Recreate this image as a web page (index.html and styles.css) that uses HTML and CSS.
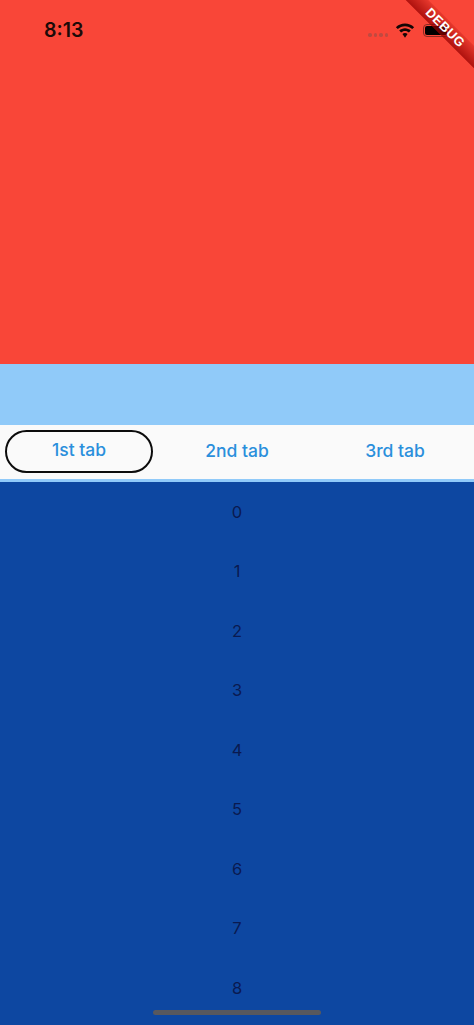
FILE: index.html
```html
<!DOCTYPE html>
<html lang="en">

<head>
    <meta charset="UTF-8">
    <meta name="viewport" content="width=device-width, initial-scale=1.0">
    <title>Tabs</title>
    <link rel="stylesheet" href="styles.css">
</head>

<body>
    <div class="app">
        <div class="header">
            <div class="status-bar">
                <span class="time">8:13</span>
                <div class="status-icons">
                    <div class="signal">
                        <span class="dot"></span>
                        <span class="dot"></span>
                        <span class="dot"></span>
                        <span class="dot"></span>
                    </div>
                    <svg class="wifi" viewBox="0 0 18 13.500" width="20" height="15">
                        <path d="M9 2.900c2.500 0 4.800 1 6.500 2.600l1.700-1.700C15 1.700 12.100.5 9 .5S3 1.700.8 3.800l1.700 1.700C4.200 3.900 6.500 2.900 9 2.900z" />
                        <path d="M9 7.100c1.400 0 2.600.5 3.500 1.400l1.700-1.700C12.800 5.500 11 4.700 9 4.700s-3.800.8-5.200 2.100l1.700 1.700c.9-.9 2.100-1.400 3.500-1.400z" />
                        <path d="M9 9.100c-.9 0-1.700.3-2.300.9L9 13.300l2.300-3.300c-.6-.6-1.400-.9-2.300-.9z" />
                    </svg>
                    <div class="battery"><div class="battery-fill"></div></div>
                </div>
            </div>
        </div>
        <div class="spacer"></div>
        <div class="tabs">
            <div class="tab"><span class="tab-pill">1st tab</span></div>
            <div class="tab">2nd tab</div>
            <div class="tab">3rd tab</div>
        </div>
        <div class="divider"></div>
        <div class="list">
            <div class="item">0</div>
            <div class="item">1</div>
            <div class="item">2</div>
            <div class="item">3</div>
            <div class="item">4</div>
            <div class="item">5</div>
            <div class="item">6</div>
            <div class="item">7</div>
            <div class="item">8</div>
        </div>
        <div class="home-bar"></div>
        <div class="debug-banner">DEBUG</div>
    </div>
</body>

</html>
```

FILE: styles.css
```css
html,
body {
    margin: 0;
    padding: 0;
}

body {
    font-family: Inter, "Liberation Sans", sans-serif;
}

.app {
    position: relative;
    width: 474px;
    height: 1025px;
    overflow: hidden;
    display: flex;
    flex-direction: column;
}

.header {
    height: 364px;
    background-color: #f94638;
}

.status-bar {
    display: flex;
    justify-content: space-between;
    align-items: center;
    height: 60px;
    padding: 0 25px 0 44px;
}

.time {
    font-size: 19.500px;
    font-weight: 600;
    color: #1c0a08;
}

.status-icons {
    display: flex;
    align-items: center;
}

.signal {
    display: flex;
    gap: 2px;
    margin: 10px 7px 0 0;
}

.dot {
    width: 3.500px;
    height: 3.500px;
    border-radius: 50%;
    background-color: #c04a40;
}

.wifi {
    fill: #140605;
    margin-right: 8px;
}

.battery {
    width: 22px;
    height: 9px;
    padding: 1px;
    border: 1px solid #8a2a22;
    border-radius: 4px;
}

.battery-fill {
    height: 100%;
    border-radius: 2px;
    background-color: #000;
}

.spacer {
    height: 61px;
    background-color: #90caf9;
}

.tabs {
    display: grid;
    grid-template-columns: repeat(3, 1fr);
    height: 54px;
    background-color: #fafafa;
}

.tab {
    display: flex;
    justify-content: center;
    align-items: center;
    padding-bottom: 4px;
    font-size: 17.500px;
    font-weight: 500;
    color: #2a8fdc;
}

.tab-pill {
    display: flex;
    justify-content: center;
    align-items: center;
    width: 148px;
    height: 43px;
    margin-top: 2px;
    padding-bottom: 3px;
    box-sizing: border-box;
    border: 2.500px solid #0c0c0c;
    border-radius: 22px;
}

.divider {
    height: 3px;
    background-color: #90caf9;
}

.list {
    flex: 1;
    background-color: #0d47a1;
}

.item {
    height: 59.500px;
    display: flex;
    justify-content: center;
    align-items: center;
    font-size: 16.500px;
    color: #0a1a50;
}

.home-bar {
    position: absolute;
    left: 153px;
    bottom: 10px;
    width: 168px;
    height: 5px;
    border-radius: 3px;
    background-color: #57585e;
}

.debug-banner {
    position: absolute;
    top: 20px;
    right: -33px;
    width: 124px;
    height: 16px;
    line-height: 16px;
    transform: rotate(45deg);
    text-align: center;
    font-family: "Liberation Sans", sans-serif;
    font-size: 13px;
    font-weight: 700;
    letter-spacing: 0.500px;
    color: #fff;
    background: linear-gradient(rgba(160, 0, 0, 0.2), rgba(150, 0, 0, 0.75));
}
```
